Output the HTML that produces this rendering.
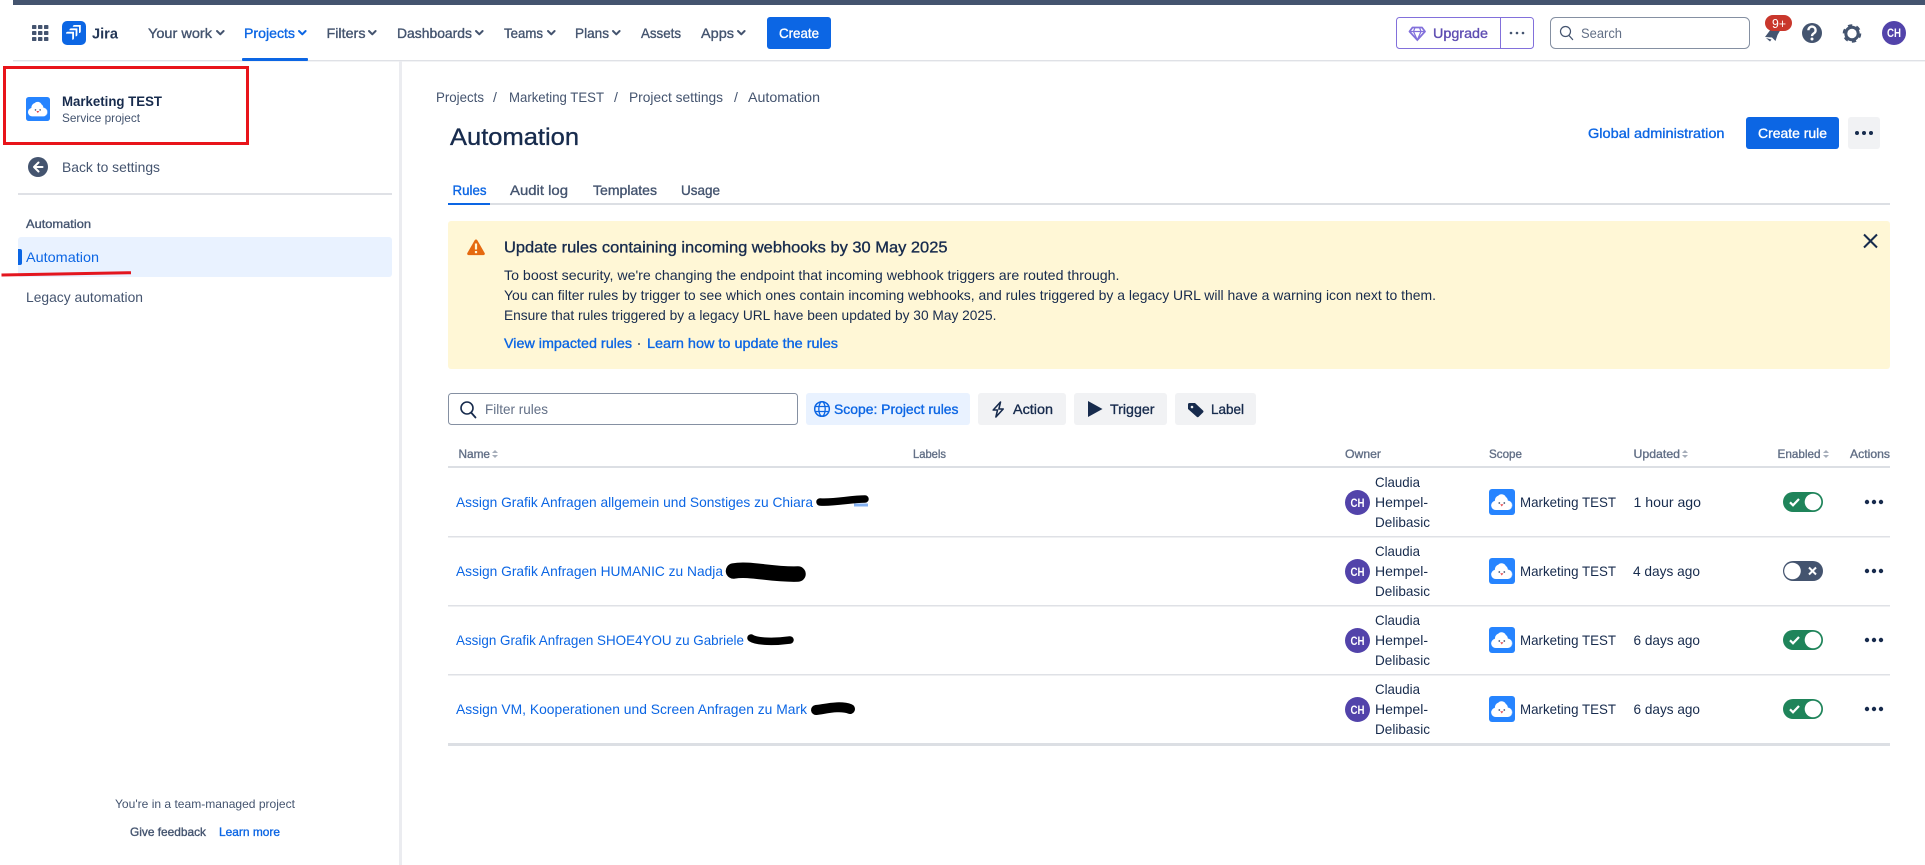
<!DOCTYPE html>
<html lang="en">
<head>
<meta charset="utf-8">
<title>Automation - Jira</title>
<style>
html,body{margin:0;padding:0;background:#fff;overflow:hidden;width:1925px;height:865px}
svg{display:block}
text{font-family:"Liberation Sans",sans-serif;font-size:14px;stroke-width:0}
.g{fill:#44546F;stroke:#44546F}
.d{fill:#172B4D;stroke:#172B4D}
.b{fill:#0C66E4;stroke:#0C66E4}
.w{fill:#fff;stroke:#fff}
.s{fill:#626F86;stroke:#626F86}
.p{fill:#5E4DB2;stroke:#5E4DB2}
.m{stroke-width:.35px}
.t{font-size:12px}
.chev{fill:none;stroke:#44546F;stroke-width:2;stroke-linecap:round;stroke-linejoin:round}
</style>
</head>
<body>
<svg width="1925" height="865" viewBox="0 0 1925 865" xmlns="http://www.w3.org/2000/svg">
<defs>
<symbol id="proj" viewBox="0 0 26 26">
<rect width="26" height="26" rx="3" fill="#2684FF"/>
<path d="M6.800 21a4.600 4.600 0 0 1-1-9.100A5.800 5.800 0 0 1 9.500 6.500a4.500 4.500 0 0 1 7.300 1.500 4.300 4.300 0 0 1 2 3.500 4.800 4.800 0 0 1 .2 9.500z" fill="#fff"/>
<path d="M19 21a4.800 4.800 0 0 0-.2-9.500c2.800.3 4.600 2.300 4.600 4.700 0 2.700-2 4.800-4.400 4.800z" fill="#B3D4FF"/>
<circle cx="10.300" cy="14" r=".9" fill="#42526E"/>
<circle cx="15.300" cy="14" r=".9" fill="#42526E"/>
<path d="M11.200 15.200h3.200l-1.600 2.300z" fill="#E5484D"/>
</symbol>
<symbol id="tog-on" viewBox="0 0 40 20">
<rect width="40" height="20" rx="10" fill="#1F845A"/>
<circle cx="30" cy="10" r="8.300" fill="#fff"/>
<path d="M7 10.300l3 3 6-6.300" fill="none" stroke="#fff" stroke-width="2.200"/>
</symbol>
<symbol id="tog-off" viewBox="0 0 40 20">
<rect width="40" height="20" rx="10" fill="#44546F"/>
<circle cx="9.500" cy="10" r="8.300" fill="#fff"/>
<path d="M26 6.500l7 7M33 6.500l-7 7" fill="none" stroke="#fff" stroke-width="2"/>
</symbol>
<symbol id="dots" viewBox="0 0 20 6">
<circle cx="3" cy="3" r="2.200" fill="#172B4D"/>
<circle cx="10" cy="3" r="2.200" fill="#172B4D"/>
<circle cx="17" cy="3" r="2.200" fill="#172B4D"/>
</symbol>
<symbol id="sort" viewBox="0 0 6 8">
<path d="M3 0l3 3H0z" fill="#A5ADBA"/>
<path d="M3 8L0 5h6z" fill="#A5ADBA"/>
</symbol>
</defs>

<!-- top strip -->
<rect x="13" y="0" width="1912" height="5" fill="#44546F"/>
<rect x="13" y="60" width="1912" height="1.400" fill="#DFE1E6"/>
<rect x="242" y="58" width="66" height="3" rx="1" fill="#0C66E4"/>

<!-- grid -->
<g fill="#44546F">
<rect x="32" y="25" width="4.400" height="4" rx=".8"/><rect x="38" y="25" width="4.400" height="4" rx=".8"/><rect x="44" y="25" width="4.400" height="4" rx=".8"/>
<rect x="32" y="31" width="4.400" height="4" rx=".8"/><rect x="38" y="31" width="4.400" height="4" rx=".8"/><rect x="44" y="31" width="4.400" height="4" rx=".8"/>
<rect x="32" y="37" width="4.400" height="4" rx=".8"/><rect x="38" y="37" width="4.400" height="4" rx=".8"/><rect x="44" y="37" width="4.400" height="4" rx=".8"/>
</g>
<!-- jira logo -->
<rect x="62" y="21" width="24" height="24" rx="5" fill="#0C66E4"/>
<path d="M67 32h6.200v6.200a1.800 1.800 0 0 0 1.800-1.800V30.200H68.800A1.800 1.800 0 0 0 67 32zM70.400 28.600h6.200v6.200a1.800 1.800 0 0 0 1.800-1.800v-6.200h-6.200a1.800 1.800 0 0 0-1.800 1.800zM73.800 25.200H80v6.200a1.800 1.800 0 0 0 1.800-1.800V23.400h-6.200a1.800 1.800 0 0 0-1.800 1.800z" fill="#fff" transform="translate(-1 1.600)"/>
<text x="92" y="38.500" textLength="26" lengthAdjust="spacingAndGlyphs" class="d" style="font-size:15px;font-weight:bold;fill:#253858;stroke:none">Jira</text>

<!-- nav -->
<text x="148" y="38" textLength="64" lengthAdjust="spacingAndGlyphs" class="g m">Your work</text>
<path class="chev" d="M217 31l3.300 3.300 3.300-3.300"/>
<text x="244" y="38" textLength="51" lengthAdjust="spacingAndGlyphs" class="b m">Projects</text>
<path class="chev" style="stroke:#0C66E4" d="M299 31l3.300 3.300 3.300-3.300"/>
<text x="326.500" y="38" textLength="39" lengthAdjust="spacingAndGlyphs" class="g m">Filters</text>
<path class="chev" d="M369 31l3.300 3.300 3.300-3.300"/>
<text x="397" y="38" textLength="75" lengthAdjust="spacingAndGlyphs" class="g m">Dashboards</text>
<path class="chev" d="M476 31l3.300 3.300 3.300-3.300"/>
<text x="504" y="38" textLength="39" lengthAdjust="spacingAndGlyphs" class="g m">Teams</text>
<path class="chev" d="M548 31l3.300 3.300 3.300-3.300"/>
<text x="575" y="38" textLength="34" lengthAdjust="spacingAndGlyphs" class="g m">Plans</text>
<path class="chev" d="M613 31l3.300 3.300 3.300-3.300"/>
<text x="641" y="38" textLength="40" lengthAdjust="spacingAndGlyphs" class="g m">Assets</text>
<text x="701" y="38" textLength="33" lengthAdjust="spacingAndGlyphs" class="g m">Apps</text>
<path class="chev" d="M738 31l3.300 3.300 3.300-3.300"/>
<rect x="767" y="17" width="64" height="32" rx="3" fill="#0C66E4"/>
<text x="779" y="38" textLength="40" lengthAdjust="spacingAndGlyphs" class="w m">Create</text>

<!-- upgrade -->
<rect x="1396.500" y="17.500" width="137" height="31" rx="3" fill="#fff" stroke="#8270DB" stroke-width="1"/>
<path d="M1500.500 17.500v31" stroke="#8270DB"/>
<path d="M1412.500 27.500h9.500l3 4-7.700 8.500-7.800-8.500z" fill="none" stroke="#8270DB" stroke-width="1.800" stroke-linejoin="round"/>
<path d="M1410 31.500h15M1415 27.500l-1.500 4 3.800 8.500 3.700-8.500-1.500-4" fill="none" stroke="#8270DB" stroke-width="1.200"/>
<text x="1433" y="38" textLength="55" lengthAdjust="spacingAndGlyphs" class="p m">Upgrade</text>
<g fill="#44546F"><circle cx="1511" cy="33" r="1.300"/><circle cx="1517" cy="33" r="1.300"/><circle cx="1523" cy="33" r="1.300"/></g>

<!-- search -->
<rect x="1550.500" y="17.500" width="199" height="31" rx="5" fill="#fff" stroke="#8590A2" stroke-width="1"/>
<circle cx="1565.500" cy="31.500" r="5" fill="none" stroke="#44546F" stroke-width="1.200"/>
<path d="M1569 35.500l3.600 4" stroke="#44546F" stroke-width="1.300" stroke-linecap="round"/>
<text x="1581" y="38" textLength="41" lengthAdjust="spacingAndGlyphs" class="s">Search</text>

<!-- bell + badge -->
<path d="M1765 37l6-8h10l-3.500 6-2 6-3.500-3.500z" fill="#44546F"/>
<path d="M1766 38l4 3.500 1.500-2" fill="#44546F"/>
<rect x="1765" y="15" width="27" height="16" rx="8" fill="#C9372C"/>
<text x="1772" y="28" textLength="14" lengthAdjust="spacingAndGlyphs" class="w" style="font-size:12.500px">9+</text>

<!-- help -->
<circle cx="1812" cy="33" r="10" fill="#44546F"/>
<path d="M1808.400 30.200a3.600 3.600 0 1 1 5.600 3c-1.400.9-2 1.600-2 2.900" fill="none" stroke="#fff" stroke-width="2.300"/>
<circle cx="1812" cy="39" r="1.500" fill="#fff"/>

<!-- gear -->
<circle cx="1852" cy="33.500" r="6.200" fill="none" stroke="#44546F" stroke-width="3"/>
<circle cx="1852" cy="33.500" r="8" fill="none" stroke="#44546F" stroke-width="2.600" stroke-dasharray="4.200 4.180"/>

<!-- avatar -->
<circle cx="1894" cy="33" r="12" fill="#5243AA"/>
<text x="1887" y="37.200" textLength="14" lengthAdjust="spacingAndGlyphs" class="w" style="font-size:11.500px;font-weight:bold;stroke:none">CH</text>

<!-- sidebar -->
<rect x="399" y="61" width="3" height="804" fill="#EBECF0"/>
<rect x="4.500" y="67.500" width="243" height="76" fill="none" stroke="#E8141A" stroke-width="3"/>
<use href="#proj" x="26" y="97" width="24" height="24"/>
<text x="62" y="106" textLength="100" lengthAdjust="spacingAndGlyphs" class="d" style="font-weight:bold;stroke:none">Marketing TEST</text>
<text x="62" y="122" textLength="78" lengthAdjust="spacingAndGlyphs" class="g t">Service project</text>
<circle cx="38" cy="167" r="10" fill="#44546F"/>
<path d="M38.500 162.500l-4.500 4.500 4.500 4.500M34.500 167h8" fill="none" stroke="#fff" stroke-width="2" stroke-linecap="round" stroke-linejoin="round"/>
<text x="62" y="172" textLength="98" lengthAdjust="spacingAndGlyphs" class="g">Back to settings</text>
<rect x="18" y="193" width="374" height="2" fill="#DFE1E6"/>
<text x="26" y="228" textLength="65" lengthAdjust="spacingAndGlyphs" class="g t m">Automation</text>
<rect x="18" y="237" width="374" height="40" rx="3" fill="#E9F2FF"/>
<path d="M18 249h2a2 2 0 0 1 2 2v12a2 2 0 0 1-2 2h-2z" fill="#0C66E4"/>
<text x="26" y="262" textLength="73" lengthAdjust="spacingAndGlyphs" class="b">Automation</text>
<path d="M1.500 275L131 272.700" stroke="#E3161F" stroke-width="3" fill="none"/>
<text x="26" y="302" textLength="117" lengthAdjust="spacingAndGlyphs" class="g">Legacy automation</text>
<text x="115" y="808" textLength="180" lengthAdjust="spacingAndGlyphs" class="g t">You're in a team-managed project</text>
<text x="130" y="836" textLength="76" lengthAdjust="spacingAndGlyphs" class="g t m">Give feedback</text>
<text x="219" y="836" textLength="61" lengthAdjust="spacingAndGlyphs" class="b t m">Learn more</text>

<!-- breadcrumbs -->
<text x="436" y="102" textLength="48" lengthAdjust="spacingAndGlyphs" class="g">Projects</text>
<text x="493" y="102" class="g">/</text>
<text x="509" y="102" textLength="95" lengthAdjust="spacingAndGlyphs" class="g">Marketing TEST</text>
<text x="614" y="102" class="g">/</text>
<text x="629" y="102" textLength="94" lengthAdjust="spacingAndGlyphs" class="g">Project settings</text>
<text x="734" y="102" class="g">/</text>
<text x="748" y="102" textLength="72" lengthAdjust="spacingAndGlyphs" class="g">Automation</text>

<!-- title row -->
<text x="450" y="145" textLength="129" lengthAdjust="spacingAndGlyphs" class="d m" style="font-size:24px">Automation</text>
<text x="1588" y="138" textLength="136.500" lengthAdjust="spacingAndGlyphs" class="b m">Global administration</text>
<rect x="1746" y="117" width="93" height="32" rx="3" fill="#0C66E4"/>
<text x="1758" y="138" textLength="69" lengthAdjust="spacingAndGlyphs" class="w m">Create rule</text>
<rect x="1848" y="117" width="32" height="32" rx="3" fill="#F1F2F4"/>
<g fill="#172B4D"><circle cx="1857" cy="133" r="2"/><circle cx="1864" cy="133" r="2"/><circle cx="1871" cy="133" r="2"/></g>

<!-- tabs -->
<rect x="448" y="203" width="1442" height="2" fill="#DCDFE4"/>
<rect x="448" y="203" width="42" height="2" fill="#0C66E4"/>
<text x="452.500" y="195" textLength="34" lengthAdjust="spacingAndGlyphs" class="b m">Rules</text>
<text x="510" y="195" textLength="58" lengthAdjust="spacingAndGlyphs" class="g m">Audit log</text>
<text x="593" y="195" textLength="64" lengthAdjust="spacingAndGlyphs" class="g m">Templates</text>
<text x="681" y="195" textLength="39" lengthAdjust="spacingAndGlyphs" class="g m">Usage</text>

<!-- banner -->
<rect x="448" y="221" width="1442" height="148" rx="3" fill="#FFF7D6"/>
<path d="M476 239.500c.6 0 1.100.3 1.400.9l7.300 12.700c.5 1-.2 2-1.300 2h-14.800c-1.100 0-1.800-1-1.300-2l7.300-12.700c.3-.6.8-.9 1.400-.9z" fill="#E56910"/>
<rect x="474.900" y="243.500" width="2.200" height="6" fill="#FFF7D6"/>
<rect x="474.900" y="251" width="2.200" height="2.200" fill="#FFF7D6"/>
<text x="504" y="252.500" textLength="443.500" lengthAdjust="spacingAndGlyphs" class="d m" style="font-size:16px">Update rules containing incoming webhooks by 30 May 2025</text>
<text x="504" y="280" textLength="615.500" lengthAdjust="spacingAndGlyphs" class="d">To boost security, we're changing the endpoint that incoming webhook triggers are routed through.</text>
<text x="504" y="300" textLength="932" lengthAdjust="spacingAndGlyphs" class="d">You can filter rules by trigger to see which ones contain incoming webhooks, and rules triggered by a legacy URL will have a warning icon next to them.</text>
<text x="504" y="320" textLength="492.500" lengthAdjust="spacingAndGlyphs" class="d">Ensure that rules triggered by a legacy URL have been updated by 30 May 2025.</text>
<text x="504" y="348" textLength="128" lengthAdjust="spacingAndGlyphs" class="b m">View impacted rules</text>
<circle cx="639" cy="344" r="1" fill="#44546F"/>
<text x="647" y="348" textLength="191" lengthAdjust="spacingAndGlyphs" class="b m">Learn how to update the rules</text>
<path d="M1864 234.500l13 13M1877 234.500l-13 13" stroke="#172B4D" stroke-width="2" fill="none"/>

<!-- filter bar -->
<rect x="448.500" y="393.500" width="349" height="31" rx="3" fill="#fff" stroke="#8590A2" stroke-width="1"/>
<circle cx="467" cy="408" r="6" fill="none" stroke="#172B4D" stroke-width="1.600"/>
<path d="M471.500 413l4 4.500" stroke="#172B4D" stroke-width="1.800" stroke-linecap="round"/>
<text x="485" y="414" textLength="63" lengthAdjust="spacingAndGlyphs" class="s">Filter rules</text>

<rect x="806" y="393" width="164" height="32" rx="3" fill="#E9F2FF"/>
<circle cx="822" cy="409" r="7.300" fill="none" stroke="#0C66E4" stroke-width="1.500"/>
<ellipse cx="822" cy="409" rx="3.200" ry="7.300" fill="none" stroke="#0C66E4" stroke-width="1.300"/>
<path d="M815 406.500h14M815 411.500h14" stroke="#0C66E4" stroke-width="1.200"/>
<text x="834" y="414" textLength="124.500" lengthAdjust="spacingAndGlyphs" class="b m">Scope: Project rules</text>

<rect x="978" y="393" width="88" height="32" rx="3" fill="#F1F2F4"/>
<path d="M1000.500 402l-7.300 8h4.300l-1.600 7 7.300-8h-4.300z" fill="none" stroke="#172B4D" stroke-width="1.600" stroke-linejoin="round"/>
<text x="1013" y="414" textLength="40" lengthAdjust="spacingAndGlyphs" class="d m">Action</text>

<rect x="1074" y="393" width="93" height="32" rx="3" fill="#F1F2F4"/>
<path d="M1088 401v16l14.500-8z" fill="#172B4D"/>
<text x="1110" y="414" textLength="44.500" lengthAdjust="spacingAndGlyphs" class="d m">Trigger</text>

<rect x="1175" y="393" width="81" height="32" rx="3" fill="#F1F2F4"/>
<path d="M1188 404.500a1.500 1.500 0 0 1 1.500-1.500h5.500l8 7.500a1.400 1.400 0 0 1 0 2l-4.300 4.300a1.400 1.400 0 0 1-2 0l-8.700-7.800z" fill="#172B4D"/>
<circle cx="1192" cy="407" r="1.300" fill="#F1F2F4"/>
<text x="1211" y="414" textLength="33" lengthAdjust="spacingAndGlyphs" class="d m">Label</text>

<!-- table head -->
<text x="458.500" y="458" textLength="31.500" lengthAdjust="spacingAndGlyphs" class="s t m">Name</text>
<use href="#sort" x="492" y="450" width="6" height="8"/>
<text x="913" y="458" textLength="33" lengthAdjust="spacingAndGlyphs" class="s t m">Labels</text>
<text x="1345" y="458" textLength="36" lengthAdjust="spacingAndGlyphs" class="s t m">Owner</text>
<text x="1489" y="458" textLength="33" lengthAdjust="spacingAndGlyphs" class="s t m">Scope</text>
<text x="1633.500" y="458" textLength="46.500" lengthAdjust="spacingAndGlyphs" class="s t m">Updated</text>
<use href="#sort" x="1682" y="450" width="6" height="8"/>
<text x="1777.500" y="458" textLength="43" lengthAdjust="spacingAndGlyphs" class="s t m">Enabled</text>
<use href="#sort" x="1823" y="450" width="6" height="8"/>
<text x="1850" y="458" textLength="40" lengthAdjust="spacingAndGlyphs" class="s t m">Actions</text>
<rect x="448" y="466" width="1442" height="2" fill="#DCDFE4"/>

<!-- row 1 -->
<text x="456" y="507" textLength="357" lengthAdjust="spacingAndGlyphs" class="b">Assign Grafik Anfragen allgemein und Sonstiges zu Chiara</text>
<path d="M854 505h14" stroke="#0C66E4" stroke-width="3" opacity=".5"/>
<path d="M820 502C835 503 850 499 865 499" stroke="#000" stroke-width="7.500" stroke-linecap="round" fill="none"/>
<circle cx="1357.500" cy="502.500" r="12.500" fill="#5243AA"/>
<text x="1350.500" y="506.800" textLength="14" lengthAdjust="spacingAndGlyphs" class="w" style="font-size:11.500px;font-weight:bold;stroke:none">CH</text>
<text x="1375" y="487" textLength="45" lengthAdjust="spacingAndGlyphs" class="d">Claudia</text>
<text x="1375" y="507" textLength="53" lengthAdjust="spacingAndGlyphs" class="d">Hempel-</text>
<text x="1375" y="527" textLength="55" lengthAdjust="spacingAndGlyphs" class="d">Delibasic</text>
<use href="#proj" x="1489" y="489" width="26" height="26"/>
<text x="1520" y="507" textLength="96" lengthAdjust="spacingAndGlyphs" class="d">Marketing TEST</text>
<text x="1633.500" y="507" textLength="67.500" lengthAdjust="spacingAndGlyphs" class="d">1 hour ago</text>
<use href="#tog-on" x="1783" y="492" width="40" height="20"/>
<use href="#dots" x="1864" y="499" width="20" height="6"/>
<rect x="448" y="536" width="1442" height="1.500" fill="#DFE1E6"/>

<!-- row 2 -->
<text x="456" y="576" textLength="267" lengthAdjust="spacingAndGlyphs" class="b">Assign Grafik Anfragen HUMANIC zu Nadja</text>
<path d="M733.500 571C750 568 772 575 798 574" stroke="#000" stroke-width="15.500" stroke-linecap="round" fill="none"/>
<circle cx="1357.500" cy="571.500" r="12.500" fill="#5243AA"/>
<text x="1350.500" y="575.800" textLength="14" lengthAdjust="spacingAndGlyphs" class="w" style="font-size:11.500px;font-weight:bold;stroke:none">CH</text>
<text x="1375" y="556" textLength="45" lengthAdjust="spacingAndGlyphs" class="d">Claudia</text>
<text x="1375" y="576" textLength="53" lengthAdjust="spacingAndGlyphs" class="d">Hempel-</text>
<text x="1375" y="596" textLength="55" lengthAdjust="spacingAndGlyphs" class="d">Delibasic</text>
<use href="#proj" x="1489" y="558" width="26" height="26"/>
<text x="1520" y="576" textLength="96" lengthAdjust="spacingAndGlyphs" class="d">Marketing TEST</text>
<text x="1633" y="576" textLength="67" lengthAdjust="spacingAndGlyphs" class="d">4 days ago</text>
<use href="#tog-off" x="1783" y="561" width="40" height="20"/>
<use href="#dots" x="1864" y="568" width="20" height="6"/>
<rect x="448" y="605" width="1442" height="1.500" fill="#DFE1E6"/>

<!-- row 3 -->
<text x="456" y="645" textLength="288" lengthAdjust="spacingAndGlyphs" class="b">Assign Grafik Anfragen SHOE4YOU zu Gabriele</text>
<path d="M751 638C757 642 775 642 790 640" stroke="#000" stroke-width="7.500" stroke-linecap="round" fill="none"/>
<circle cx="1357.500" cy="640.500" r="12.500" fill="#5243AA"/>
<text x="1350.500" y="644.800" textLength="14" lengthAdjust="spacingAndGlyphs" class="w" style="font-size:11.500px;font-weight:bold;stroke:none">CH</text>
<text x="1375" y="625" textLength="45" lengthAdjust="spacingAndGlyphs" class="d">Claudia</text>
<text x="1375" y="645" textLength="53" lengthAdjust="spacingAndGlyphs" class="d">Hempel-</text>
<text x="1375" y="665" textLength="55" lengthAdjust="spacingAndGlyphs" class="d">Delibasic</text>
<use href="#proj" x="1489" y="627" width="26" height="26"/>
<text x="1520" y="645" textLength="96" lengthAdjust="spacingAndGlyphs" class="d">Marketing TEST</text>
<text x="1633.500" y="645" textLength="66.500" lengthAdjust="spacingAndGlyphs" class="d">6 days ago</text>
<use href="#tog-on" x="1783" y="630" width="40" height="20"/>
<use href="#dots" x="1864" y="637" width="20" height="6"/>
<rect x="448" y="674" width="1442" height="1.500" fill="#DFE1E6"/>

<!-- row 4 -->
<text x="456" y="714" textLength="351" lengthAdjust="spacingAndGlyphs" class="b">Assign VM, Kooperationen und Screen Anfragen zu Mark</text>
<path d="M816 710C825 709 840 705 850 709" stroke="#000" stroke-width="10" stroke-linecap="round" fill="none"/>
<circle cx="1357.500" cy="709.500" r="12.500" fill="#5243AA"/>
<text x="1350.500" y="713.800" textLength="14" lengthAdjust="spacingAndGlyphs" class="w" style="font-size:11.500px;font-weight:bold;stroke:none">CH</text>
<text x="1375" y="694" textLength="45" lengthAdjust="spacingAndGlyphs" class="d">Claudia</text>
<text x="1375" y="714" textLength="53" lengthAdjust="spacingAndGlyphs" class="d">Hempel-</text>
<text x="1375" y="734" textLength="55" lengthAdjust="spacingAndGlyphs" class="d">Delibasic</text>
<use href="#proj" x="1489" y="696" width="26" height="26"/>
<text x="1520" y="714" textLength="96" lengthAdjust="spacingAndGlyphs" class="d">Marketing TEST</text>
<text x="1633.500" y="714" textLength="66.500" lengthAdjust="spacingAndGlyphs" class="d">6 days ago</text>
<use href="#tog-on" x="1783" y="699" width="40" height="20"/>
<use href="#dots" x="1864" y="706" width="20" height="6"/>
<rect x="448" y="743" width="1442" height="3" fill="#DCDFE4"/>
</svg>
</body>
</html>
